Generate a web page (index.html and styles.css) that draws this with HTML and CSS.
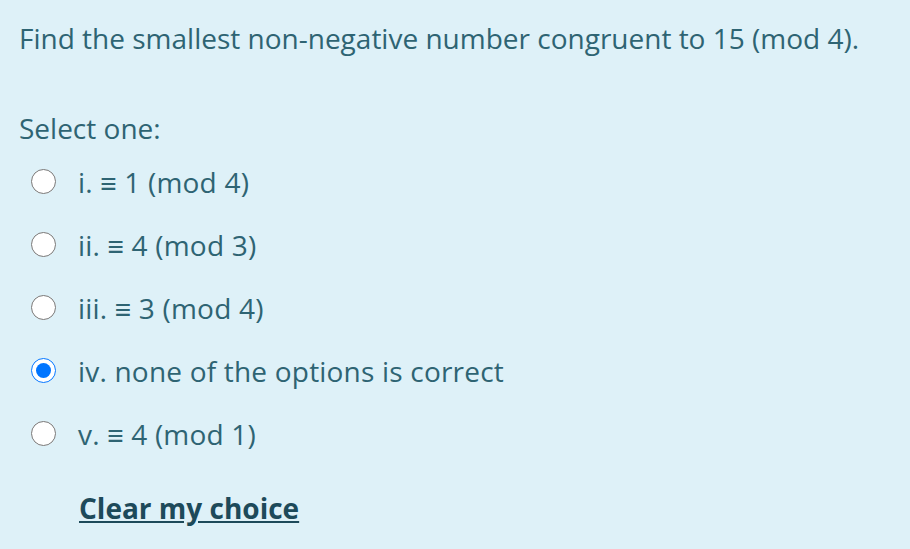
FILE: index.html
```html
<!DOCTYPE html>
<html lang="en">
<head>
    <meta charset="UTF-8" />
    <title>Question</title>
    <link rel="stylesheet" href="styles.css">
</head>
<body>
    <div class="formulation">
        <div class="qtext">Find the smallest non-negative number congruent to 15 (mod 4).</div>
        <div class="ablock">
            <div class="prompt">Select one:</div>
            <div class="answer">
                <label class="opt"><input type="radio" name="q1"><span>i. &equiv; 1 (mod 4)</span></label>
                <label class="opt"><input type="radio" name="q1"><span>ii. &equiv; 4 (mod 3)</span></label>
                <label class="opt"><input type="radio" name="q1"><span>iii. &equiv; 3 (mod 4)</span></label>
                <label class="opt"><input type="radio" name="q1" checked><span>iv. none of the options is correct</span></label>
                <label class="opt"><input type="radio" name="q1"><span>v. &equiv; 4 (mod 1)</span></label>
            </div>
            <div class="clear"><a href="#">Clear my choice</a></div>
        </div>
    </div>
</body>
</html>
```

FILE: styles.css
```css
*{margin:0;padding:0;box-sizing:border-box;}
html,body{height:100%;}
body{
    background:#def1f8;
    font-family:"Open Sans","Noto Sans",sans-serif;
    color:#2e6473;
    font-size:28px;
}
.formulation{padding:18px 19px;}
.qtext{line-height:40px;}
.ablock{margin-top:50px;}
.prompt{line-height:40px;}
.answer{display:flex;flex-direction:column;margin-top:2px;}
.opt{display:flex;align-items:center;height:63px;padding-left:12px;}
.opt span{letter-spacing:0.2px;}
.opt input{width:25px;height:25px;margin:0 22px 0 0;}
.clear{padding:24px 0 0 60px;}
.clear a{color:#1d4a5a;font-weight:bold;text-decoration:underline;}
```
